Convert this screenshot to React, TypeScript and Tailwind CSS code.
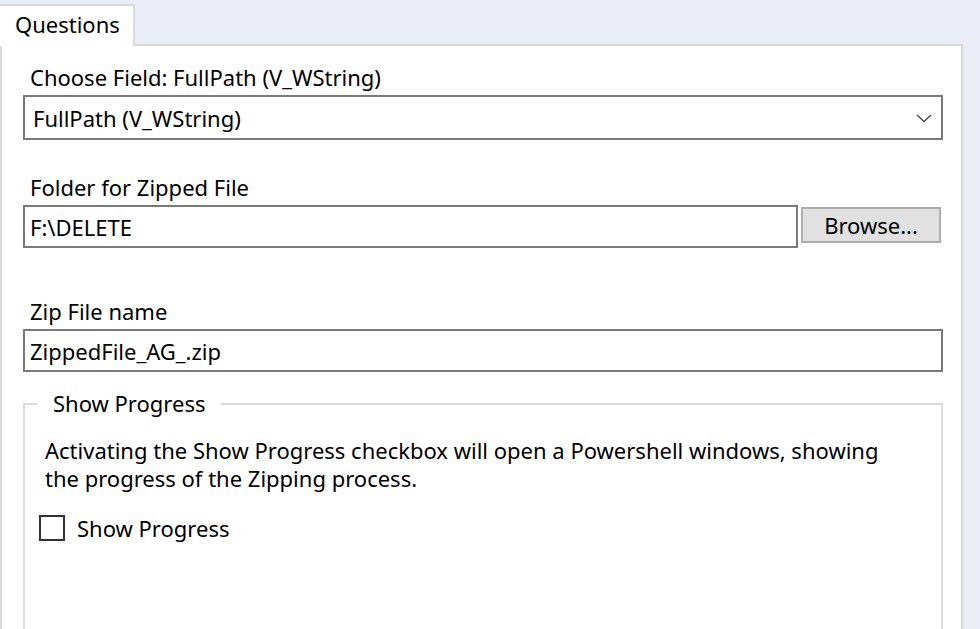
import { useState } from "react";

const FONT = "font-['Noto_Sans','Open_Sans',sans-serif]";

function Chevron() {
  return (
    <svg width="16" height="10" viewBox="0 0 16 10" aria-hidden="true" className="shrink-0">
      <polyline points="1,2 8,8.5 15,2" fill="none" stroke="#4a4a4a" strokeWidth="1.4" />
    </svg>
  );
}

export default function App() {
  const [showProgress, setShowProgress] = useState(false);

  return (
    <div className={`flex h-[629px] w-[980px] flex-col overflow-hidden bg-[#e9edf8] text-[22px] leading-[26px] text-black ${FONT}`}>
      {/* tab strip */}
      <div className="flex pt-[4px]">
        <div className="relative z-10 -mb-[2px] flex h-[42px] w-[135px] items-center border-t-2 border-r-2 border-[#d9d9d9] bg-white pl-[15px] pb-[4px]">
          Questions
        </div>
      </div>

      {/* page */}
      <div className="flex w-[963px] flex-1 flex-col border-2 border-b-0 border-[#d9d9d9] bg-white pl-[21px] pr-[18px] shadow-[3px_0_0_#ebebeb]">
        <label className="mt-[18px] pl-[7px]">Choose Field: FullPath (V_WString)</label>
        <div className="mt-[5px] flex h-[45px] items-center justify-between border-2 border-[#7a7a7a] pl-[8px] pr-[9px]">
          <span>FullPath (V_WString)</span>
          <Chevron />
        </div>

        <label className="mt-[34px] pl-[7px]">Folder for Zipped File</label>
        <div className="mt-[5px] flex items-start">
          <div className="flex h-[43px] flex-1 items-center border-2 border-[#7a7a7a] pl-[5px]">F:\DELETE</div>
          <button className="ml-[3px] mr-[2px] mt-[2px] h-[36px] w-[140px] border-2 border-[#adadad] bg-[#e1e1e1] pb-[1px]">
            Browse...
          </button>
        </div>

        <label className="mt-[50px] pl-[7px]">Zip File name</label>
        <div className="mt-[5px] flex h-[43px] items-center border-2 border-[#7a7a7a] pl-[5px]">ZippedFile_AG_.zip</div>

        <div className="relative mt-[31px] flex-1 border-2 border-b-0 border-[#dcdcdc] pl-[20px]">
          <span className="absolute -top-[15px] left-[12px] bg-white px-[16px]">Show Progress</span>
          <p className="mt-[31px] leading-[28px]">
            Activating the Show Progress checkbox will open a Powershell windows, showing
            <br />
            the progress of the Zipping process.
          </p>
          <label className="-ml-[6px] mt-[23px] flex items-center gap-[12px]">
            <input
              type="checkbox"
              checked={showProgress}
              onChange={(e) => setShowProgress(e.target.checked)}
              className="h-[26px] w-[26px] appearance-none border-2 border-[#333333] bg-white"
            />
            <span>Show Progress</span>
          </label>
        </div>
      </div>
    </div>
  );
}
